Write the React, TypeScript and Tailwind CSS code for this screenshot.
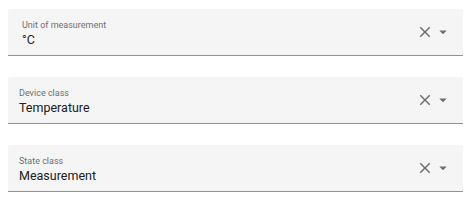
import React from 'react';

const fields = [
    { label: 'Unit of measurement', value: '°C', indent: 'pl-[14px]' },
    { label: 'Device class', value: 'Temperature', indent: 'pl-[11px]' },
    { label: 'State class', value: 'Measurement', indent: 'pl-[11px]' },
];

function CloseIcon() {
    return (
        <svg viewBox="0 0 24 24" className="w-[18px] h-[18px] fill-[#6f6f6f]">
            <path d="M19,6.41L17.59,5L12,10.59L6.41,5L5,6.41L10.59,12L5,17.59L6.41,19L12,13.41L17.59,19L19,17.59L13.41,12L19,6.41Z" />
        </svg>
    );
}

function MenuDownIcon() {
    return (
        <svg viewBox="0 0 24 24" className="w-[18px] h-[18px] fill-[#6f6f6f]">
            <path d="M7,10L12,15L17,10H7Z" />
        </svg>
    );
}

export default function App() {
    return (
        <div className="w-[474px] h-[203px] bg-white px-[8px] pt-[9px] flex flex-col gap-[21px] font-['Roboto',sans-serif]">
            {fields.map((field) => (
                <div
                    key={field.label}
                    className="h-[47px] w-[455px] bg-[#f5f5f5] rounded-t-[3px] border-b-[1.5px] border-[#929292] flex items-center justify-between pr-[11px]"
                >
                    <div className={`flex flex-col self-start pt-[11px] ${field.indent}`}>
                        <span className="text-[9px] leading-[11px] text-[#707070]">{field.label}</span>
                        <span className="text-[12.5px] leading-[15px] text-[#212121] mt-[1px]">{field.value}</span>
                    </div>
                    <div className="flex items-center">
                        <CloseIcon />
                        <MenuDownIcon />
                    </div>
                </div>
            ))}
        </div>
    );
}
